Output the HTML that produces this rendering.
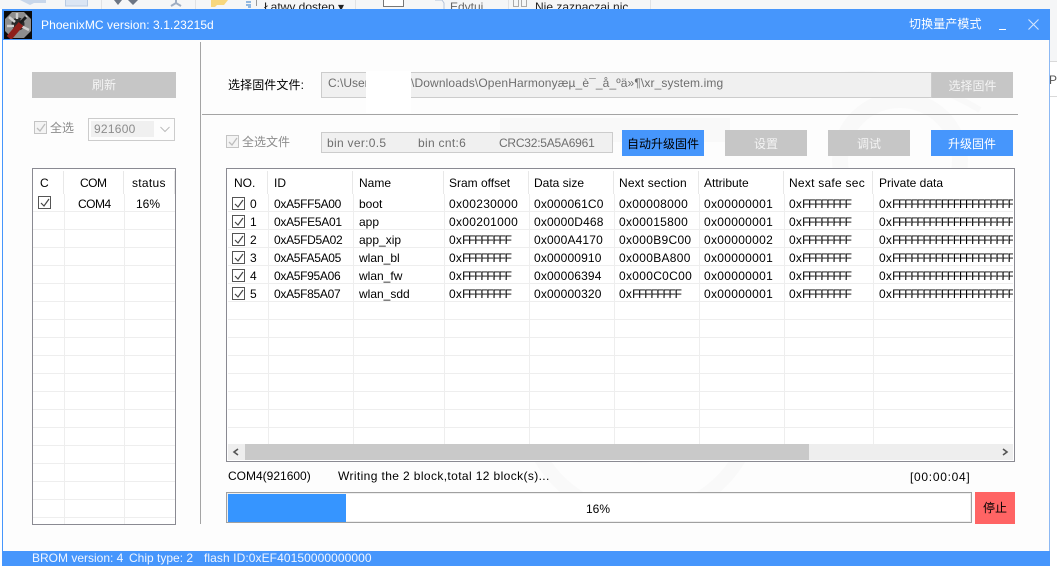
<!DOCTYPE html>
<html><head><meta charset="utf-8">
<style>
html,body{margin:0;padding:0;background:#fff}
#p{position:relative;width:1057px;height:572px;overflow:hidden;background:#fff;font:12px "Liberation Sans","Noto Sans CJK SC",sans-serif;color:#000}
#p div,#p span{position:absolute;white-space:nowrap}
.t{line-height:16px;height:16px}
.g{color:#8c8c8c}
.btn{background:#c6c6c6;color:#f4f4f4;text-align:center}
.blue{background:#4696fc}
.chk{width:11px;height:11px;border:1px solid #555;background:#fff}
.chk svg{position:absolute;left:1px;top:1px}
.dis{border-color:#c4c4c4;background:#f4f4f4}
.row{left:0;width:785px;height:18px}
.c2{left:47px}.c3{left:132px}.c4{left:222px}.c5{left:307px}.c6{left:392px}.c7{left:477px}.c8{left:562px}.c9{left:652px}
.d .c2{letter-spacing:-.3px}
.d .c4,.d .c6,.d .c7{letter-spacing:.3px}
.d .c5{letter-spacing:.15px}
.d .f{letter-spacing:-1.25px}
em{font-style:normal;letter-spacing:.2px}
.clip{width:134px;overflow:hidden}
</style></head><body><div id="p">

<!-- Background window toolbar -->
<div style="left:0;top:0;width:1057px;height:9px;background:#f5f6f7"></div>
<svg style="position:absolute;left:0;top:0" width="260" height="9">
 <path d="M20 0h26v3H34l-4 2z" fill="#c9d7ea"/>
 <rect x="65.500" y="-1" width="22" height="7" fill="#dbe5f3" stroke="#b9cbe3"/>
 <path d="M114 0h8l-4 5zM128 0h10l-5 5z" fill="#6d7684"/>
 <path d="M176 0v3M171 6l5-3 5 3" fill="none" stroke="#a0aec2" stroke-width="2"/>
 <path d="M211 0h17l-4 5h-7l-2 2h-4z" fill="#f7d77e"/>
 <path d="M246 2h5M246 5h5M248 7h3" stroke="#2a78c8"/>
 <path d="M256.500 0v6" stroke="#999"/>
</svg>
<div style="left:101px;top:0;width:1px;height:9px;background:#e1e2e4"></div>
<div style="left:195px;top:0;width:1px;height:9px;background:#e1e2e4"></div>
<div style="left:355px;top:0;width:1px;height:9px;background:#e1e2e4"></div>
<div style="left:508px;top:0;width:1px;height:9px;background:#e1e2e4"></div>
<div style="left:650px;top:0;width:1px;height:9px;background:#e1e2e4"></div>
<div style="left:383px;top:0;width:21px;height:7px;border:1px solid #777;border-top:0;background:#fff;box-sizing:border-box"></div>
<div style="left:0;top:0;width:700px;height:9px;overflow:hidden">
 <span class="t" style="left:264px;top:-1px;font-size:12px;color:#222">Łatwy dostęp ▾</span>
 <span class="t" style="left:450px;top:-1px;font-size:12px;color:#666">Edytuj</span>
 <span class="t" style="left:535px;top:-1px;font-size:12px;color:#222">Nie zaznaczaj nic</span>
</div>
<svg style="position:absolute;left:435px;top:0" width="100" height="9">
 <path d="M0 0h7l2 3v6" fill="none" stroke="#b5c4da"/>
 <path d="M78.500 0v6.500h5V0M86.500 0v6.500h5V0" fill="none" stroke="#aaa"/>
</svg>
<!-- right side behind window -->
<div style="left:1050px;top:9px;width:7px;height:557px;background:#fff"></div>
<div style="left:1050px;top:9px;width:7px;height:52px;background:#f5f6f7"></div>
<div style="left:1050px;top:61px;width:7px;height:1px;background:#d9d9d9"></div>
<div style="left:1050px;top:96px;width:7px;height:1px;background:#d9d9d9"></div>
<div style="left:1050px;top:72px;width:7px;height:16px;overflow:hidden"><span class="t" style="left:-1px;top:0;color:#555">P</span></div>

<!-- Main window -->
<div style="left:2px;top:9px;width:1048px;height:557px;background:#fdfdfd"></div>
<svg style="position:absolute;left:200px;top:40px" width="850" height="512" viewBox="200 40 850 512">
 <g fill="none" stroke="#f9f9f9">
  <circle cx="640" cy="400" r="115" stroke-width="14"/>
  <circle cx="640" cy="400" r="50" stroke-width="26"/>
  <circle cx="900" cy="160" r="60" stroke-width="16"/>
  <path d="M780 90Q880 50 980 110" stroke-width="6"/>
  <path d="M500 130H730" stroke-width="24"/>
 </g>
</svg>
<div style="left:2px;top:40px;width:1px;height:511px;background:#4696fc"></div>
<div style="left:1049px;top:40px;width:1px;height:511px;background:#8db9f4"></div>

<!-- Title bar -->
<div class="blue" style="left:2px;top:9px;width:1048px;height:31px"></div>
<svg style="position:absolute;left:4px;top:11px" width="28" height="28" viewBox="0 0 28 28">
 <rect width="28" height="28" fill="#0b0b0b"/>
 <path d="M8 1h12l7 7v12l-7 7H8l-7-7V8z" fill="#8e8e8e"/>
 <circle cx="14" cy="13" r="6.500" fill="#2a2a2a"/>
 <path d="M5 6l6 5M23 5l-6 5M3 15h7M25 19l-8-4M13 2v6" stroke="#d0d0d0" stroke-width="2.500"/>
 <path d="M5 27L17 13" stroke="#8f1f1a" stroke-width="6"/>
 <path d="M16 12l6-6" stroke="#1c1c1c" stroke-width="3"/>
</svg>
<span class="t" style="left:41px;top:17px;color:#fff;letter-spacing:.07px">PhoenixMC version: 3.1.23215d</span>
<span class="t" style="left:909px;top:16px;color:#fff;letter-spacing:.1px">切换量产模式</span>
<div style="left:999px;top:29px;width:7px;height:1px;background:#fff"></div>
<svg style="position:absolute;left:1028px;top:19px" width="11" height="11"><path d="M.5.5l10 10M10.500 .5l-10 10" stroke="#d5e6fd" stroke-width="1.100"/></svg>

<!-- Status bar -->
<div class="blue" style="left:2px;top:551px;width:1048px;height:15px"></div>
<span class="t" style="left:32px;top:550px;color:#f0f5ff">BROM version: 4</span>
<span class="t" style="left:129px;top:550px;color:#f0f5ff">Chip type: 2</span>
<span class="t" style="left:204px;top:550px;color:#f0f5ff;letter-spacing:.08px">flash ID:0xEF40150000000000</span>

<!-- Dividers -->
<div style="left:200px;top:42px;width:1px;height:482px;background:#a4a4a4"></div>
<div style="left:202px;top:114px;width:816px;height:1px;background:#a4a4a4"></div>

<!-- Left panel -->
<div class="btn t" style="left:32px;top:72px;width:144px;height:26px;line-height:27px">刷新</div>
<div class="chk dis" style="left:34px;top:121px"><svg width="10" height="10"><path d="M1 5l3 3 5-7" fill="none" stroke="#bdbdbd" stroke-width="1.300"/></svg></div>
<span class="t g" style="left:50px;top:120px">全选</span>
<div style="left:88px;top:118px;width:85px;height:21px;border:1px solid #ccc;background:#fdfdfd"></div>
<div style="left:91px;top:121px;width:63px;height:16px;background:#f0f0f0"></div>
<span class="t g" style="left:94px;top:121px;letter-spacing:.25px">921600</span>
<svg style="position:absolute;left:160px;top:126px" width="10" height="7"><path d="M.5 1l4.500 4.500L9.500 1" fill="none" stroke="#bbb"/></svg>

<div style="left:32px;top:168px;width:142px;height:355px;border:1px solid #8a8a92;background:#fff;overflow:hidden">
 <div style="left:0;top:26px;width:142px;height:329px;background:repeating-linear-gradient(to bottom,transparent 0 16px,#eee 16px 17px,transparent 17px 18px)"></div>
 <div style="left:31px;top:25px;width:1px;height:330px;background:#eee"></div>
 <div style="left:91px;top:25px;width:1px;height:330px;background:#eee"></div>
 <div style="left:30px;top:2px;width:1px;height:23px;background:#e8e8e8"></div>
 <div style="left:90px;top:2px;width:1px;height:23px;background:#e8e8e8"></div>
 <div style="left:141px;top:2px;width:1px;height:23px;background:#e8e8e8"></div>
 <span class="t" style="left:7px;top:6px">C</span>
 <span class="t" style="left:47px;top:6px;letter-spacing:-.5px">COM</span>
 <span class="t" style="left:99px;top:6px;letter-spacing:.3px">status</span>
 <div class="chk" style="left:5px;top:27px"><svg width="10" height="10"><path d="M1 5l3 3 5-7" fill="none" stroke="#444" stroke-width="1.200"/></svg></div>
 <span class="t" style="left:45px;top:27px;letter-spacing:-.5px">COM4</span>
 <span class="t" style="left:103px;top:27px">16%</span>
</div>

<!-- Firmware selector -->
<span class="t" style="left:228px;top:77px;letter-spacing:.1px">选择固件文件:</span>
<div style="left:321px;top:72px;width:609px;height:24px;background:#f0f0f0;border:1px solid #ccc"></div>
<div style="left:322px;top:97px;width:610px;height:1px;background:#ccc"></div>
<span class="t g" style="left:328px;top:75px;color:#6e6e6e">C:\User</span>
<div style="left:366px;top:71px;width:45px;height:42px;background:#fff"></div>
<span class="t g" style="left:411px;top:75px;color:#6e6e6e;letter-spacing:.12px">\Downloads\OpenHarmonyæµ_è¯_å_ºä»¶\xr_system.img</span>
<div class="btn t" style="left:932px;top:72px;width:81px;height:26px;line-height:28px">选择固件</div>

<!-- Row 2 -->
<div class="chk dis" style="left:226px;top:135px"><svg width="10" height="10"><path d="M1 5l3 3 5-7" fill="none" stroke="#bdbdbd" stroke-width="1.300"/></svg></div>
<span class="t g" style="left:242px;top:134px">全选文件</span>
<div style="left:321px;top:132px;width:290px;height:19px;background:#f0f0f0;border:1px solid #ccc"></div>
<span class="t" style="left:327px;top:135px;color:#6e6e6e;letter-spacing:.3px">bin ver:0.5</span>
<span class="t" style="left:418px;top:135px;color:#6e6e6e;letter-spacing:.3px">bin cnt:6</span>
<span class="t" style="left:499px;top:135px;color:#6e6e6e;letter-spacing:-.23px">CRC32:5A5A6961</span>
<div class="blue t" style="left:622px;top:130px;width:82px;height:26px;line-height:28px;text-align:center">自动升级固件</div>
<div class="btn t" style="left:725px;top:130px;width:82px;height:26px;line-height:28px">设置</div>
<div class="btn t" style="left:828px;top:130px;width:82px;height:26px;line-height:28px">调试</div>
<div class="blue t" style="left:931px;top:130px;width:82px;height:26px;line-height:28px;text-align:center;color:#fff">升级固件</div>

<!-- Main table -->
<div style="left:226px;top:168px;width:787px;height:292px;border:1px solid #8a8a92;background:#fff;overflow:hidden">
 <div style="left:1px;top:26px;width:785px;height:249px;background:repeating-linear-gradient(to bottom,transparent 0 16px,#eee 16px 17px,transparent 17px 18px)"></div>
 <div style="left:41px;top:25px;width:1px;height:250px;background:#eee"></div>
 <div style="left:126px;top:25px;width:1px;height:250px;background:#eee"></div>
 <div style="left:217px;top:25px;width:1px;height:250px;background:#eee"></div>
 <div style="left:302px;top:25px;width:1px;height:250px;background:#eee"></div>
 <div style="left:387px;top:25px;width:1px;height:250px;background:#eee"></div>
 <div style="left:472px;top:25px;width:1px;height:250px;background:#eee"></div>
 <div style="left:557px;top:25px;width:1px;height:250px;background:#eee"></div>
 <div style="left:646px;top:25px;width:1px;height:250px;background:#eee"></div>
 <div style="left:40px;top:2px;width:1px;height:23px;background:#e8e8e8"></div>
 <div style="left:125px;top:2px;width:1px;height:23px;background:#e8e8e8"></div>
 <div style="left:216px;top:2px;width:1px;height:23px;background:#e8e8e8"></div>
 <div style="left:301px;top:2px;width:1px;height:23px;background:#e8e8e8"></div>
 <div style="left:386px;top:2px;width:1px;height:23px;background:#e8e8e8"></div>
 <div style="left:471px;top:2px;width:1px;height:23px;background:#e8e8e8"></div>
 <div style="left:556px;top:2px;width:1px;height:23px;background:#e8e8e8"></div>
 <div style="left:645px;top:2px;width:1px;height:23px;background:#e8e8e8"></div>

 <div class="row" style="top:6px">
  <span class="t" style="left:7px">NO.</span><span class="t c2">ID</span><span class="t c3">Name</span><span class="t c4">Sram offset</span><span class="t c5">Data size</span><span class="t c6" style="letter-spacing:.15px">Next section</span><span class="t c7">Attribute</span><span class="t c8" style="letter-spacing:.25px">Next safe sec</span><span class="t c9">Private data</span>
 </div>
 <div class="row d" style="top:27px">
  <div class="chk" style="left:5px;top:1px"><svg width="10" height="10"><path d="M1 5l3 3 5-7" fill="none" stroke="#444" stroke-width="1.200"/></svg></div>
  <span class="t" style="left:23px">0</span><span class="t c2">0xA5FF5A00</span><span class="t c3">boot</span><span class="t c4">0x00230000</span><span class="t c5">0x000061C0</span><span class="t c6">0x00008000</span><span class="t c7">0x00000001</span><span class="t c8 f"><em>0x</em>FFFFFFFF</span><span class="t c9 clip f"><em>0x</em>FFFFFFFFFFFFFFFFFFFFFFFFFFFFFF</span>
 </div>
 <div class="row d" style="top:45px">
  <div class="chk" style="left:5px;top:1px"><svg width="10" height="10"><path d="M1 5l3 3 5-7" fill="none" stroke="#444" stroke-width="1.200"/></svg></div>
  <span class="t" style="left:23px">1</span><span class="t c2">0xA5FE5A01</span><span class="t c3">app</span><span class="t c4">0x00201000</span><span class="t c5">0x0000D468</span><span class="t c6">0x00015800</span><span class="t c7">0x00000001</span><span class="t c8 f"><em>0x</em>FFFFFFFF</span><span class="t c9 clip f"><em>0x</em>FFFFFFFFFFFFFFFFFFFFFFFFFFFFFF</span>
 </div>
 <div class="row d" style="top:63px">
  <div class="chk" style="left:5px;top:1px"><svg width="10" height="10"><path d="M1 5l3 3 5-7" fill="none" stroke="#444" stroke-width="1.200"/></svg></div>
  <span class="t" style="left:23px">2</span><span class="t c2">0xA5FD5A02</span><span class="t c3">app_xip</span><span class="t c4 f"><em>0x</em>FFFFFFFF</span><span class="t c5">0x000A4170</span><span class="t c6">0x000B9C00</span><span class="t c7">0x00000002</span><span class="t c8 f"><em>0x</em>FFFFFFFF</span><span class="t c9 clip f"><em>0x</em>FFFFFFFFFFFFFFFFFFFFFFFFFFFFFF</span>
 </div>
 <div class="row d" style="top:81px">
  <div class="chk" style="left:5px;top:1px"><svg width="10" height="10"><path d="M1 5l3 3 5-7" fill="none" stroke="#444" stroke-width="1.200"/></svg></div>
  <span class="t" style="left:23px">3</span><span class="t c2">0xA5FA5A05</span><span class="t c3">wlan_bl</span><span class="t c4 f"><em>0x</em>FFFFFFFF</span><span class="t c5">0x00000910</span><span class="t c6">0x000BA800</span><span class="t c7">0x00000001</span><span class="t c8 f"><em>0x</em>FFFFFFFF</span><span class="t c9 clip f"><em>0x</em>FFFFFFFFFFFFFFFFFFFFFFFFFFFFFF</span>
 </div>
 <div class="row d" style="top:99px">
  <div class="chk" style="left:5px;top:1px"><svg width="10" height="10"><path d="M1 5l3 3 5-7" fill="none" stroke="#444" stroke-width="1.200"/></svg></div>
  <span class="t" style="left:23px">4</span><span class="t c2">0xA5F95A06</span><span class="t c3">wlan_fw</span><span class="t c4 f"><em>0x</em>FFFFFFFF</span><span class="t c5">0x00006394</span><span class="t c6">0x000C0C00</span><span class="t c7">0x00000001</span><span class="t c8 f"><em>0x</em>FFFFFFFF</span><span class="t c9 clip f"><em>0x</em>FFFFFFFFFFFFFFFFFFFFFFFFFFFFFF</span>
 </div>
 <div class="row d" style="top:117px">
  <div class="chk" style="left:5px;top:1px"><svg width="10" height="10"><path d="M1 5l3 3 5-7" fill="none" stroke="#444" stroke-width="1.200"/></svg></div>
  <span class="t" style="left:23px">5</span><span class="t c2">0xA5F85A07</span><span class="t c3">wlan_sdd</span><span class="t c4 f"><em>0x</em>FFFFFFFF</span><span class="t c5">0x00000320</span><span class="t c6 f"><em>0x</em>FFFFFFFF</span><span class="t c7">0x00000001</span><span class="t c8 f"><em>0x</em>FFFFFFFF</span><span class="t c9 clip f"><em>0x</em>FFFFFFFFFFFFFFFFFFFFFFFFFFFFFF</span>
 </div>

 <!-- Scrollbar -->
 <div style="left:1px;top:275px;width:785px;height:16px;background:#eee"></div>
 <div style="left:18px;top:275px;width:564px;height:16px;background:#c9c9c9"></div>
 <svg style="position:absolute;left:5px;top:279px" width="8" height="8"><path d="M6 1L2 4l4 3" fill="none" stroke="#555" stroke-width="1.600"/></svg>
 <svg style="position:absolute;left:774px;top:279px" width="8" height="8"><path d="M2 1l4 3-4 3" fill="none" stroke="#555" stroke-width="1.600"/></svg>
</div>

<!-- Progress -->
<span class="t" style="left:228px;top:468px">COM4(921600)</span>
<span class="t" style="left:338px;top:468px;letter-spacing:.38px">Writing the 2 block,total 12 block(s)...</span>
<span class="t" style="left:910px;top:469px;letter-spacing:.7px">[00:00:04]</span>
<div style="left:226px;top:492px;width:744px;height:29px;border:1px solid #a0a0a0;background:#fff;box-shadow:inset 0 0 0 1px #eee"></div>
<div style="left:228px;top:494px;width:118px;height:28px;background:#3695ff"></div>
<span class="t" style="left:586px;top:501px">16%</span>
<div class="t" style="left:975px;top:492px;width:40px;height:32px;line-height:33px;background:#ff6464;text-align:center">停止</div>

</div></body></html>
